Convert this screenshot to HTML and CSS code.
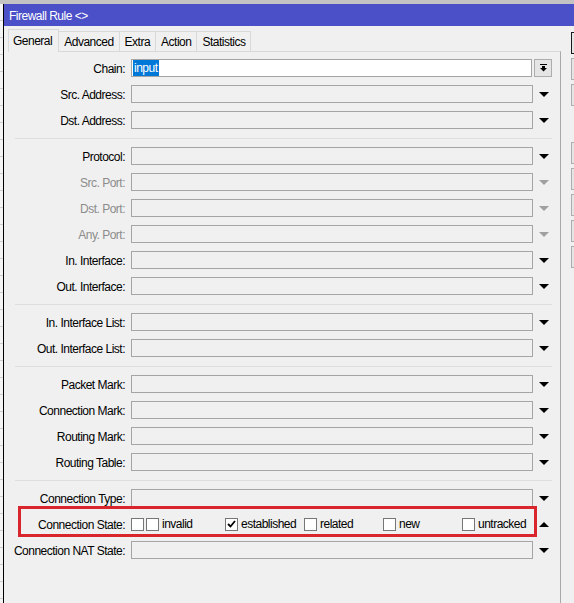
FILE: index.html
```html
<!DOCTYPE html>
<html>
<head>
    <title>Firewall Rule</title>
    <link rel="stylesheet" href="styles.css">
</head>
<body>
    <div class="desk-top"></div>
    <div class="desk">
        <div class="behind"></div>

        <div class="window">
            <div class="titlebar">Firewall Rule &lt;&gt;</div>

            <div class="win-body">
                <div class="tabbox">
                    <div class="tabs">
                        <div class="tab active">General</div>
                        <div class="tab">Advanced</div>
                        <div class="tab">Extra</div>
                        <div class="tab">Action</div>
                        <div class="tab">Statistics</div>
                    </div>

                    <div class="panel">
                        <!-- chain is the only editable combo -->
                        <div class="row">
                            <div class="lbl">Chain:</div>
                            <div class="field edit"><span class="sel">input</span></div>
                            <div class="drop start">
                                <div class="combo-btn">
                                    <svg width="7" height="8" viewBox="0 0 7 8"><rect x="0" y="0" width="7" height="1" fill="#000"/><rect x="2" y="2" width="3" height="2" fill="#000"/><polygon points="0,4 7,4 3.5,7.5" fill="#000"/></svg>
                                </div>
                            </div>
                        </div>
                        <div class="row">
                            <div class="lbl">Src. Address:</div>
                            <div class="field"></div>
                            <div class="drop"><span class="tri"></span></div>
                        </div>
                        <div class="row">
                            <div class="lbl">Dst. Address:</div>
                            <div class="field"></div>
                            <div class="drop"><span class="tri"></span></div>
                        </div>

                        <div class="sep"></div>

                        <div class="row">
                            <div class="lbl">Protocol:</div>
                            <div class="field"></div>
                            <div class="drop"><span class="tri"></span></div>
                        </div>
                        <div class="row off">
                            <div class="lbl">Src. Port:</div>
                            <div class="field"></div>
                            <div class="drop"><span class="tri"></span></div>
                        </div>
                        <div class="row off">
                            <div class="lbl">Dst. Port:</div>
                            <div class="field"></div>
                            <div class="drop"><span class="tri"></span></div>
                        </div>
                        <div class="row off">
                            <div class="lbl">Any. Port:</div>
                            <div class="field"></div>
                            <div class="drop"><span class="tri"></span></div>
                        </div>
                        <div class="row">
                            <div class="lbl">In. Interface:</div>
                            <div class="field"></div>
                            <div class="drop"><span class="tri"></span></div>
                        </div>
                        <div class="row">
                            <div class="lbl">Out. Interface:</div>
                            <div class="field"></div>
                            <div class="drop"><span class="tri"></span></div>
                        </div>

                        <div class="sep"></div>

                        <div class="row">
                            <div class="lbl">In. Interface List:</div>
                            <div class="field"></div>
                            <div class="drop"><span class="tri"></span></div>
                        </div>
                        <div class="row">
                            <div class="lbl">Out. Interface List:</div>
                            <div class="field"></div>
                            <div class="drop"><span class="tri"></span></div>
                        </div>

                        <div class="sep"></div>

                        <div class="row">
                            <div class="lbl">Packet Mark:</div>
                            <div class="field"></div>
                            <div class="drop"><span class="tri"></span></div>
                        </div>
                        <div class="row">
                            <div class="lbl">Connection Mark:</div>
                            <div class="field"></div>
                            <div class="drop"><span class="tri"></span></div>
                        </div>
                        <div class="row">
                            <div class="lbl">Routing Mark:</div>
                            <div class="field"></div>
                            <div class="drop"><span class="tri"></span></div>
                        </div>
                        <div class="row">
                            <div class="lbl">Routing Table:</div>
                            <div class="field"></div>
                            <div class="drop"><span class="tri"></span></div>
                        </div>

                        <div class="sep"></div>

                        <div class="row">
                            <div class="lbl">Connection Type:</div>
                            <div class="field"></div>
                            <div class="drop"><span class="tri"></span></div>
                        </div>
                        <div class="row">
                            <div class="lbl">Connection State:</div>
                            <div class="checks">
                                <span class="cb neg"></span>
                                <label class="opt"><span class="cb"></span>invalid</label>
                                <label class="opt"><span class="cb"><svg width="9" height="8" viewBox="0 0 9 8"><path d="M1 4 L3.5 6.5 L8 1" stroke="#000" stroke-width="1.8" fill="none"/></svg></span>established</label>
                                <label class="opt"><span class="cb"></span>related</label>
                                <label class="opt"><span class="cb"></span>new</label>
                                <label class="opt"><span class="cb"></span>untracked</label>
                            </div>
                            <div class="drop"><span class="tri up"></span></div>
                            <div class="mark"></div>
                        </div>
                        <div class="row">
                            <div class="lbl">Connection NAT State:</div>
                            <div class="field"></div>
                            <div class="drop"><span class="tri"></span></div>
                        </div>
                    </div>
                </div>

                <!-- dialog buttons, cut off at the right edge -->
                <div class="side">
                    <div class="sbtn default"></div>
                    <div class="sbtn"></div>
                    <div class="sbtn"></div>
                    <div class="sgap"></div>
                    <div class="sbtn"></div>
                    <div class="sbtn"></div>
                    <div class="sbtn"></div>
                    <div class="sbtn"></div>
                    <div class="sbtn"></div>
                </div>
            </div>
        </div>
    </div>
</body>
</html>
```

FILE: styles.css
```css
body { margin: 0; width: 574px; height: 603px; overflow: hidden; background: #f0f0f0; font-family: "Liberation Sans", Arial, sans-serif; font-size: 12px; letter-spacing: -0.5px; color: #000; }

.desk-top { height: 4px; background: #c3c3c3; }
.desk { display: flex; height: 599px; }
.behind { width: 3px; flex: none; background: repeating-linear-gradient(#f4f4f4 0 16px, #cfcfcf 16px 17px); }

.window { flex: 1; border-left: 1px solid #000; background: #f0f0f0; min-width: 0; overflow: hidden; }
.titlebar { height: 22px; line-height: 24px; padding-left: 5px; background: #4b50c9; color: #fff; white-space: nowrap; }

.win-body { display: flex; }
.tabbox { width: 553px; margin-left: 4px; flex: none; }

.tabs { display: flex; height: 22px; margin-top: 3px; position: relative; z-index: 1; }
.tab { height: 20px; line-height: 20px; margin-top: 2px; padding: 0 5px; border: 1px solid #d9d9d9; border-bottom: none; border-left: none; box-sizing: border-box; background: #f0f0f0; }
.tab.active { height: 23px; margin-top: 0; line-height: 22px; border-left: 1px solid #d9d9d9; padding: 0 6px 0 4px; }

.panel { border-top: 1px solid #d9d9d9; border-right: 1px solid #a9a9a9; padding-top: 7px; height: 560px; display: flex; flex-direction: column; gap: 8px; }

.row { display: flex; align-items: center; height: 18px; position: relative; flex: none; }
.lbl { width: 117px; height: 18px; line-height: 20px; padding-right: 6px; text-align: right; white-space: nowrap; }
.off .lbl { color: #8c8c8c; }
.field { width: 402px; height: 18px; box-sizing: border-box; border: 1px solid #a5a5a5; background: #f0f0f0; }
.field.edit { width: 401px; background: #fff; padding-left: 1px; }
.sel { display: inline-block; height: 16px; line-height: 17px; padding: 0 1px; background: #0078d7; color: #fff; }

.drop { width: 22px; height: 18px; display: flex; align-items: center; justify-content: center; flex: none; }
.drop.start { justify-content: flex-start; }
.combo-btn { margin-left: 2px; width: 18px; height: 18px; box-sizing: border-box; border: 1px solid #adadad; background: #e5e5e5; display: flex; align-items: center; justify-content: center; }
.tri { width: 0; height: 0; border-left: 5px solid transparent; border-right: 5px solid transparent; border-top: 5px solid #000; }
.tri.up { border-top: none; border-bottom: 5px solid #000; }
.off .tri { border-top-color: #a0a0a0; }

.sep { height: 1px; background: #dedede; margin: 1px 8px 0 7px; flex: none; }

.checks { display: flex; align-items: center; width: 402px; }
.cb { width: 13px; height: 13px; box-sizing: border-box; border: 1px solid #767676; background: #fff; display: flex; align-items: center; justify-content: center; flex: none; }
.cb.neg { margin-right: 2px; }
.opt { width: 79px; height: 18px; line-height: 20px; flex: none; display: flex; align-items: center; gap: 3px; white-space: nowrap; }

.mark { position: absolute; left: 10px; top: -9px; width: 519px; height: 31px; box-sizing: border-box; border: 3px solid #d9262c; pointer-events: none; }

.side { margin-left: 10px; padding-top: 6px; display: flex; flex-direction: column; gap: 4px; }
.sbtn { width: 80px; height: 22px; box-sizing: border-box; border: 1px solid #adadad; background: #e5e5e5; }
.sbtn.default { border-color: #1a1a1a; }
.sgap { height: 28px; }
```
